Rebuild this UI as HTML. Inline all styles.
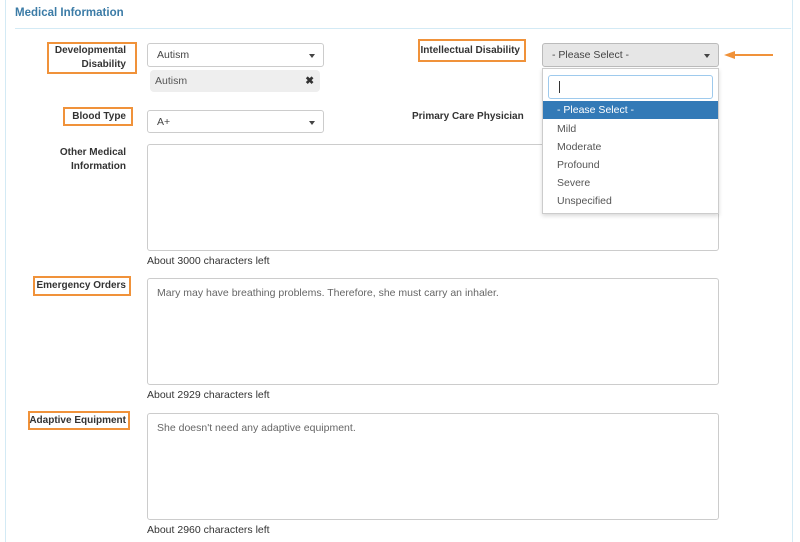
<!DOCTYPE html>
<html><head><style>
body{margin:0;width:800px;height:542px;background:#fff;font-family:"Liberation Sans",sans-serif;font-size:10.5px;color:#333;position:relative;overflow:hidden}
.a{position:absolute;white-space:nowrap}
.lbl{font-weight:bold;color:#333;text-align:right;font-size:10px}
.ob{border:2px solid #f0923a;box-sizing:border-box}
.sel{border:1px solid #ccc;border-radius:3px;box-sizing:border-box;background:#fff;padding-left:9px;line-height:23px;color:#444}
.car{position:absolute;right:8px;top:10px;width:0;height:0;border-left:3.5px solid transparent;border-right:3.5px solid transparent;border-top:4px solid #444}
.ta{border:1px solid #ccc;border-radius:3px;box-sizing:border-box;background:#fff;padding:8px 9px;color:#666}
.cnt{color:#333}
.opt{position:absolute;left:14px;color:#555}
</style></head><body>
<div class="a" style="left:5px;top:0;width:1px;height:542px;background:#d3eaf5"></div>
<div class="a" style="left:792px;top:0;width:1px;height:542px;background:#d3eaf5"></div>
<div class="a" style="left:15px;top:7px;font-size:11.5px;font-weight:bold;color:#3b7ba6">Medical Information</div>
<div class="a" style="left:15px;top:28px;width:776px;height:1px;background:#d3eaf5"></div>

<div class="a ob" style="left:47px;top:42px;width:90px;height:32px"></div>
<div class="a lbl" style="left:40px;top:44px;width:86px;line-height:14px">Developmental<br>Disability</div>
<div class="a sel" style="left:147px;top:43px;width:177px;height:24px">Autism<span class="car"></span></div>
<div class="a" style="left:150px;top:70px;width:170px;height:22px;background:#eee;border-radius:4px;line-height:22px;padding-left:5px;box-sizing:border-box;color:#555">Autism<span style="position:absolute;right:6px;top:0;font-weight:bold;color:#333">✖</span></div>

<div class="a ob" style="left:63px;top:107px;width:70px;height:19px"></div>
<div class="a lbl" style="left:60px;top:111px;width:66px">Blood Type</div>
<div class="a sel" style="left:147px;top:110px;width:177px;height:23px">A+<span class="car"></span></div>

<div class="a lbl" style="left:30px;top:146px;width:96px;line-height:14px">Other Medical<br>Information</div>
<div class="a ta" style="left:147px;top:144px;width:572px;height:107px"></div>
<div class="a cnt" style="left:147px;top:255px">About 3000 characters left</div>

<div class="a ob" style="left:418px;top:39px;width:108px;height:23px"></div>
<div class="a lbl" style="left:418px;top:45px;width:102px">Intellectual Disability</div>
<div class="a sel" style="left:542px;top:43px;width:177px;height:24px;background:#e6e6e6;border-color:#bbb">- Please Select -<span class="car"></span></div>
<div class="a" style="left:734px;top:54px;width:39px;height:2px;background:#f0923a"></div>
<div class="a" style="left:724px;top:51px;width:0;height:0;border-top:4px solid transparent;border-bottom:4px solid transparent;border-right:11px solid #f0923a"></div>

<div class="a lbl" style="left:412px;top:111px">Primary Care Physician</div>

<div class="a" style="left:542px;top:68px;width:177px;height:146px;background:#fff;border:1px solid #ccc;box-sizing:border-box;box-shadow:0 2px 4px rgba(0,0,0,.15)">
<div class="a" style="left:5px;top:6px;width:165px;height:24px;border:1px solid #9ecaed;border-radius:3px;box-sizing:border-box"><div class="a" style="left:10px;top:5px;width:1px;height:12px;background:#333"></div></div>
<div class="a" style="left:0;top:32px;width:175px;height:18px;background:#337ab7"></div>
<div class="opt" style="top:35px;color:#fff">- Please Select -</div>
<div class="opt" style="top:54px">Mild</div>
<div class="opt" style="top:72px">Moderate</div>
<div class="opt" style="top:90px">Profound</div>
<div class="opt" style="top:108px">Severe</div>
<div class="opt" style="top:126px">Unspecified</div>
</div>

<div class="a ob" style="left:33px;top:276px;width:98px;height:20px"></div>
<div class="a lbl" style="left:30px;top:280px;width:96px">Emergency Orders</div>
<div class="a ta" style="left:147px;top:278px;width:572px;height:107px">Mary may have breathing problems. Therefore, she must carry an inhaler.</div>
<div class="a cnt" style="left:147px;top:389px">About 2929 characters left</div>

<div class="a ob" style="left:28px;top:411px;width:102px;height:19px"></div>
<div class="a lbl" style="left:28px;top:415px;width:98px">Adaptive Equipment</div>
<div class="a ta" style="left:147px;top:413px;width:572px;height:107px">She doesn't need any adaptive equipment.</div>
<div class="a cnt" style="left:147px;top:524px">About 2960 characters left</div>
</body></html>
